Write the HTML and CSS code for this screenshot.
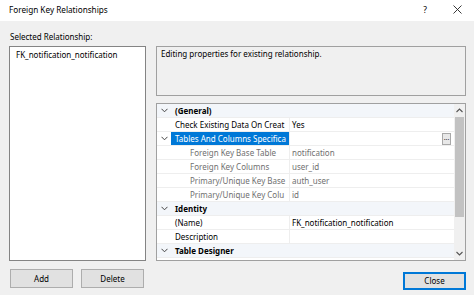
FILE: index.html
```html
<!DOCTYPE html>
<html>
<head>
<meta charset="utf-8">
<link rel="stylesheet" href="styles.css">
</head>
<body>
<div class="dialog">
  <div class="titlebar">
    <span class="title">Foreign Key Relationships</span>
    <span class="help">?</span>
    <span class="xbtn"><svg width="9" height="9" viewBox="0 0 9 9"><path d="M0.5 0.5 L8.5 8.5 M8.5 0.5 L0.5 8.5" stroke="#222" stroke-width="0.9" fill="none"/></svg></span>
  </div>
  <div class="content">
    <div class="label">Selected Relationship:</div>
    <div class="main">
      <div class="list">
        <div class="list-item">FK_notification_notification</div>
      </div>
      <div class="right">
        <div class="desc">Editing properties for existing relationship.</div>
        <div class="pgrid">
          <div class="rows">
            <div class="row cat"><span class="margin"><svg class="chev" width="7" height="5" viewBox="0 0 7 5"><path d="M0.5 0.8 L3.5 3.8 L6.5 0.8" stroke="#444" stroke-width="1" fill="none"/></svg></span><span class="name">(General)</span></div>
            <div class="row"><span class="margin"></span><span class="name">Check Existing Data On Creat</span><span class="value">Yes</span></div>
            <div class="row"><span class="margin"><svg class="chev" width="7" height="5" viewBox="0 0 7 5"><path d="M0.5 0.8 L3.5 3.8 L6.5 0.8" stroke="#444" stroke-width="1" fill="none"/></svg></span><span class="name sel">Tables And Columns Specifica</span><span class="value"><span class="ell">...</span></span></div>
            <div class="row sub"><span class="margin"></span><span class="name">Foreign Key Base Table</span><span class="value">notification</span></div>
            <div class="row sub"><span class="margin"></span><span class="name">Foreign Key Columns</span><span class="value">user_id</span></div>
            <div class="row sub"><span class="margin"></span><span class="name">Primary/Unique Key Base</span><span class="value">auth_user</span></div>
            <div class="row sub"><span class="margin"></span><span class="name">Primary/Unique Key Colu</span><span class="value">id</span></div>
            <div class="row cat"><span class="margin"><svg class="chev" width="7" height="5" viewBox="0 0 7 5"><path d="M0.5 0.8 L3.5 3.8 L6.5 0.8" stroke="#444" stroke-width="1" fill="none"/></svg></span><span class="name">Identity</span></div>
            <div class="row"><span class="margin"></span><span class="name">(Name)</span><span class="value">FK_notification_notification</span></div>
            <div class="row"><span class="margin"></span><span class="name">Description</span><span class="value"></span></div>
            <div class="row cat"><span class="margin"><svg class="chev" width="7" height="5" viewBox="0 0 7 5"><path d="M0.5 0.8 L3.5 3.8 L6.5 0.8" stroke="#444" stroke-width="1" fill="none"/></svg></span><span class="name">Table Designer</span></div>
          </div>
          <div class="scrollbar">
            <div class="sb-arrow"><svg width="7" height="5" viewBox="0 0 7 5"><path d="M0.5 4 L3.5 1 L6.5 4" stroke="#555" stroke-width="1.1" fill="none"/></svg></div>
            <div class="sb-thumb"></div>
            <div class="sb-space"></div>
            <div class="sb-arrow"><svg width="7" height="5" viewBox="0 0 7 5"><path d="M0.5 1 L3.5 4 L6.5 1" stroke="#555" stroke-width="1.1" fill="none"/></svg></div>
          </div>
        </div>
      </div>
    </div>
    <div class="footer">
      <div class="btn">Add</div>
      <div class="btn">Delete</div>
      <div class="spacer"></div>
      <div class="btn default">Close</div>
    </div>
  </div>
</div>
</body>
</html>
```
FILE: styles.css
```css
html, body {
  margin: 0;
  padding: 0;
}
body {
  width: 474px;
  height: 295px;
  overflow: hidden;
  background: #f0f0f0;
  font-family: "Noto Sans", "Open Sans", sans-serif;
  font-size: 8px;
  color: #000;
}
.dialog {
  display: flex;
  flex-direction: column;
  height: 295px;
}
.titlebar {
  height: 21px;
  background: #fff;
  display: flex;
  align-items: center;
  padding-left: 9px;
}
.title {
  flex: 1;
  font-size: 8.2px;
  margin-top: -2px;
}
.help {
  width: 10px;
  text-align: center;
  font-size: 8.5px;
  margin-right: 23px;
  margin-top: -2px;
}
.xbtn {
  display: flex;
  margin-right: 12px;
  margin-top: -2px;
}
.content {
  padding: 0 8px 0 9px;
}
.label {
  height: 12px;
  line-height: 12px;
  margin-top: 10px;
  padding-left: 1px;
  margin-bottom: 3px;
}
.main {
  display: flex;
  gap: 10px;
  height: 215px;
}
.list {
  width: 137px;
  flex: none;
  box-sizing: border-box;
  background: #fff;
  border: 1px solid #848484;
  padding: 2px 0 0 6px;
}
.list-item {
  line-height: 11px;
}
.right {
  flex: 1;
  display: flex;
  flex-direction: column;
  gap: 7px;
}
.desc {
  border: 1px solid #a0a0a0;
  background: #f0f0f0;
  padding: 2px 4px;
  line-height: 10px;
  box-sizing: border-box;
  height: 50px;
}
.pgrid {
  flex: 1;
  display: flex;
  border: 1px solid #a0a0a0;
  background: #fff;
}
.rows {
  flex: 1;
  display: flex;
  flex-direction: column;
}
.row {
  display: flex;
  height: 14px;
  box-sizing: border-box;
  border-bottom: 1px solid #eeeeee;
  align-items: stretch;
  line-height: 13px;
}
.margin {
  width: 14px;
  flex: none;
  display: flex;
  align-items: center;
  justify-content: center;
}
.name {
  width: 119px;
  flex: none;
  padding-left: 4px;
  box-sizing: border-box;
  border-right: 1px solid #eeeeee;
  white-space: nowrap;
  overflow: hidden;
}
.value {
  flex: 1;
  padding-left: 2px;
  white-space: nowrap;
  position: relative;
}
.cat {
  background: #f3f6fa;
  font-weight: bold;
}
.cat .name {
  border-right: none;
}
.sub {
  color: #707070;
}
.sub .name {
  padding-left: 19px;
}
.sel {
  background: #0078d7;
  color: #fff;
}
.ell {
  position: absolute;
  right: 3px;
  top: 1px;
  width: 7px;
  height: 10px;
  border: 1px solid #a8a8a8;
  background: #e8e8e8;
  font-size: 7px;
  line-height: 8px;
  text-align: center;
  color: #333;
}
.scrollbar {
  width: 11px;
  background: #f0f0f0;
  display: flex;
  flex-direction: column;
  align-items: stretch;
}
.sb-arrow {
  height: 13px;
  display: flex;
  align-items: center;
  justify-content: center;
}
.sb-thumb {
  height: 100px;
  background: #c2c2c2;
  margin: 0 1px;
}
.sb-space {
  flex: 1;
}
.footer {
  display: flex;
  align-items: flex-start;
  margin-top: 8px;
  padding-left: 1px;
  gap: 8px;
}
.spacer {
  flex: 1;
}
.btn {
  width: 61px;
  height: 17px;
  background: #e1e1e1;
  border: 1px solid #adadad;
  text-align: center;
  line-height: 17px;
}
.btn.default {
  margin-top: 3px;
  width: 59px;
  border: 2px solid #0078d7;
  height: 14px;
  line-height: 14px;
}
```
